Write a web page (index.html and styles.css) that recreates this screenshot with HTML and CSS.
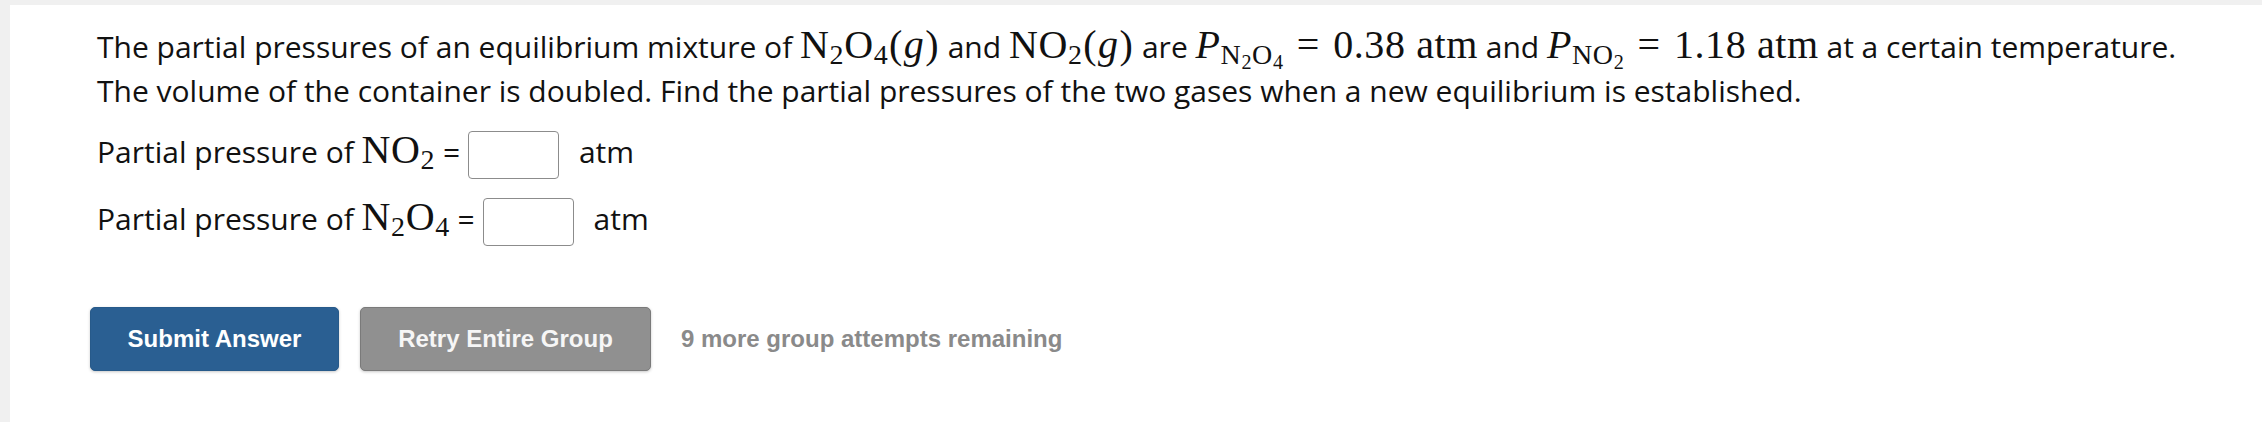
FILE: index.html
```html
<!DOCTYPE html>
<html lang="en">
<head>
<meta charset="utf-8">
<title>Partial pressures</title>
<link rel="stylesheet" href="styles.css">
</head>
<body>
<div class="panel">
  <p class="question">The partial pressures of an equilibrium mixture of <span class="m">N<sub>2</sub>O<sub>4</sub><span class="paren">(</span><i>g</i><span class="paren">)</span></span> and <span class="m">NO<sub>2</sub><span class="paren">(</span><i>g</i><span class="paren">)</span></span> are <span class="m"><i>P</i><sub>N<sub>2</sub>O<sub>4</sub></sub><span class="eq">=</span>0.38 atm</span> and <span class="m"><i>P</i><sub>NO<sub>2</sub></sub><span class="eq">=</span>1.18 atm</span> at a certain temperature.<br>The volume of the container is doubled. Find the partial pressures of the two gases when a new equilibrium is established.</p>
  <div class="row">Partial pressure of <span class="m">NO<sub>2</sub></span> = <input class="box" type="text" aria-label="Partial pressure of NO2"><span class="unit">atm</span></div>
  <div class="row">Partial pressure of <span class="m">N<sub>2</sub>O<sub>4</sub></span> = <input class="box" type="text" aria-label="Partial pressure of N2O4"><span class="unit">atm</span></div>
  <div class="actions">
    <button class="btn primary" type="button">Submit Answer</button>
    <button class="btn secondary" type="button">Retry Entire Group</button>
    <span class="attempts">9 more group attempts remaining</span>
  </div>
</div>
</body>
</html>
```

FILE: styles.css
```css
html, body {
  margin: 0;
  padding: 0;
  background: #f0f0f0;
}

.panel {
  margin: 5px 0 0 10px;
  min-height: 417px;
  box-sizing: border-box;
  background: #ffffff;
  padding: 20px 0 0 87px;
  font-family: "Open Sans", "Noto Sans", sans-serif;
  font-size: 30px;
  line-height: 44px;
  color: #111111;
}

.question {
  margin: 0;
}

.m {
  font-family: "Liberation Serif", serif;
  font-size: 40px;
  letter-spacing: 0.015em;
  line-height: 0;
  white-space: nowrap;
}

.m i {
  font-style: italic;
}

.m sub {
  font-size: 70%;
  line-height: 0;
  vertical-align: -0.22em;
}

.m sub sub {
  font-size: 72%;
  vertical-align: -0.25em;
}

.paren {
  margin: 0 0.02em;
}

.eq {
  margin: 0 0.33em;
}

.row {
  margin-top: 17px;
}

.row + .row {
  margin-top: 18px;
}

.box {
  display: inline-block;
  vertical-align: middle;
  width: 91px;
  height: 48px;
  box-sizing: border-box;
  margin: 0 20px 0 0;
  padding: 0;
  border: 1px solid #8c8c8c;
  border-radius: 4px;
  background: #ffffff;
  font: inherit;
}

.actions {
  display: flex;
  align-items: center;
  gap: 21px;
  margin: 61px 0 0 -7px;
}

.btn {
  height: 64px;
  box-sizing: border-box;
  padding: 0;
  border-radius: 5px;
  font-family: "Liberation Sans", Arial, sans-serif;
  font-weight: bold;
  font-size: 24px;
  color: #ffffff;
  box-shadow: 0 1px 3px rgba(0, 0, 0, 0.22);
}

.primary {
  width: 249px;
  background: #2a5f92;
  border: 1px solid #275a8a;
}

.secondary {
  width: 291px;
  background: #909090;
  border: 1px solid #7a7a7a;
  color: #f6f6f6;
}

.attempts {
  margin-left: 9px;
  font-family: "Liberation Sans", Arial, sans-serif;
  font-weight: bold;
  font-size: 24px;
  color: #8a8a8a;
}
```
